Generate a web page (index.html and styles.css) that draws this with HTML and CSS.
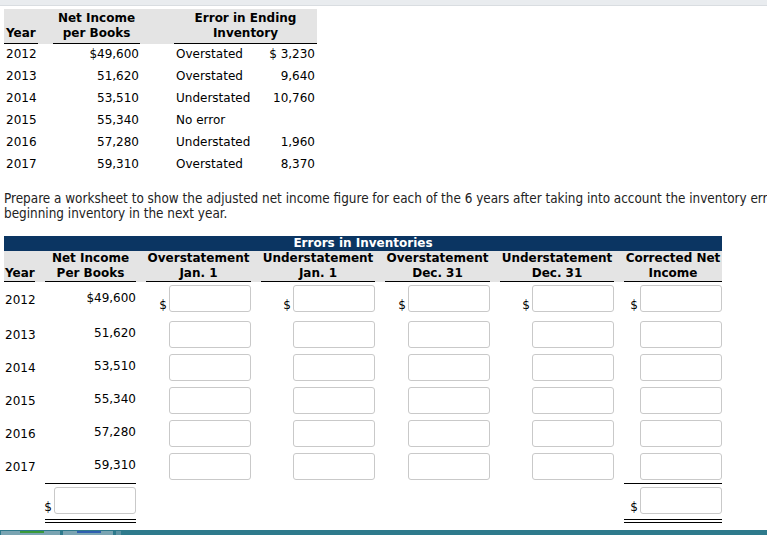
FILE: index.html
```html
<!DOCTYPE html>
<html lang="en">
<head>
<meta charset="utf-8">
<title>Inventory errors worksheet</title>
<link rel="stylesheet" href="styles.css">
</head>
<body>
<div class="topband"></div>
<main class="page">
  <section class="t1">
    <div class="t1-head">
      <div class="h c-year"><span class="ul">Year</span></div>
      <div class="h c-ni"><span class="ul">Net Income<br>per Books</span></div>
      <div class="h c-err"><span class="ul">Error in Ending<br>Inventory</span></div>
    </div>
    <div class="t1-body">
      <div class="c-year">2012</div><div class="c-ni num">$49,600</div><div class="c-lab">Overstated</div><div class="c-amt num">$ 3,230</div>
      <div class="c-year">2013</div><div class="c-ni num">51,620</div><div class="c-lab">Overstated</div><div class="c-amt num">9,640</div>
      <div class="c-year">2014</div><div class="c-ni num">53,510</div><div class="c-lab">Understated</div><div class="c-amt num">10,760</div>
      <div class="c-year">2015</div><div class="c-ni num">55,340</div><div class="c-lab">No error</div><div class="c-amt num"></div>
      <div class="c-year">2016</div><div class="c-ni num">57,280</div><div class="c-lab">Understated</div><div class="c-amt num">1,960</div>
      <div class="c-year">2017</div><div class="c-ni num">59,310</div><div class="c-lab">Overstated</div><div class="c-amt num">8,370</div>
    </div>
  </section>

  <div class="prompt">
    <p><span class="line">Prepare a worksheet to show the adjusted net income figure for each of the 6 years after taking into account the inventory errors and their effect on</span><br>beginning inventory in the next year.</p>
  </div>

  <section class="t2">
    <div class="t2-band">Errors in Inventories</div>
    <div class="t2-head">
      <div class="hh left"><span>Year</span></div>
      <div class="hh"><span>Net Income<br>Per Books</span></div>
      <div class="hh"><span>Overstatement<br>Jan. 1</span></div>
      <div class="hh"><span>Understatement<br>Jan. 1</span></div>
      <div class="hh"><span>Overstatement<br>Dec. 31</span></div>
      <div class="hh"><span>Understatement<br>Dec. 31</span></div>
      <div class="hh"><span>Corrected Net<br>Income</span></div>
    </div>

    <div class="t2-row first">
      <div class="yr">2012</div><div class="ni">$49,600</div>
      <div class="inp"><span class="cur">$</span><input type="text"></div>
      <div class="inp"><span class="cur">$</span><input type="text"></div>
      <div class="inp"><span class="cur">$</span><input type="text"></div>
      <div class="inp"><span class="cur">$</span><input type="text"></div>
      <div class="inp"><span class="cur">$</span><input type="text"></div>
    </div>
    <div class="t2-row">
      <div class="yr">2013</div><div class="ni">51,620</div>
      <div class="inp"><input type="text"></div><div class="inp"><input type="text"></div><div class="inp"><input type="text"></div><div class="inp"><input type="text"></div><div class="inp"><input type="text"></div>
    </div>
    <div class="t2-row">
      <div class="yr">2014</div><div class="ni">53,510</div>
      <div class="inp"><input type="text"></div><div class="inp"><input type="text"></div><div class="inp"><input type="text"></div><div class="inp"><input type="text"></div><div class="inp"><input type="text"></div>
    </div>
    <div class="t2-row">
      <div class="yr">2015</div><div class="ni">55,340</div>
      <div class="inp"><input type="text"></div><div class="inp"><input type="text"></div><div class="inp"><input type="text"></div><div class="inp"><input type="text"></div><div class="inp"><input type="text"></div>
    </div>
    <div class="t2-row">
      <div class="yr">2016</div><div class="ni">57,280</div>
      <div class="inp"><input type="text"></div><div class="inp"><input type="text"></div><div class="inp"><input type="text"></div><div class="inp"><input type="text"></div><div class="inp"><input type="text"></div>
    </div>
    <div class="t2-row">
      <div class="yr">2017</div><div class="ni">59,310</div>
      <div class="inp"><input type="text"></div><div class="inp"><input type="text"></div><div class="inp"><input type="text"></div><div class="inp"><input type="text"></div><div class="inp"><input type="text"></div>
    </div>
    <div class="t2-row total">
      <div class="yr"></div>
      <div class="inp tot"><span class="cur">$</span><input type="text"></div>
      <div></div><div></div><div></div><div></div>
      <div class="inp tot"><span class="cur">$</span><input type="text"></div>
    </div>
  </section>
</main>
<footer class="taskbar">
  <span class="tb tb1"><i class="g"></i></span>
  <span class="tb tb2"><i class="b"></i></span>
  <span class="tb tb3"></span>
</footer>
</body>
</html>
```

FILE: styles.css
```css
html, body {
  margin: 0;
  padding: 0;
  overflow: hidden;
}
body {
  font-family: "DejaVu Sans", Verdana, sans-serif;
  font-size: 12px;
  color: #000;
  background: #fff;
}
.topband {
  height: 5px;
  background: #e9ecef;
  border-bottom: 1px solid #d9dde1;
}
.page {
  padding: 3px 0 0 4px;
}

/* ---------- table 1 ---------- */
.t1 { width: 313px; }
.t1-head,
.t1-body {
  display: grid;
  grid-template-columns: 34px 15px 86px 35px 70px 72px;
}
.t1-head {
  background: #e4e4e4;
  height: 35px;
  font-weight: bold;
  line-height: 15px;
}
.t1-head .h {
  display: flex;
  align-items: flex-end;
}
.t1-head .ul {
  display: block;
  width: 100%;
  border-bottom: 1px solid #000;
  padding-bottom: 2px;
  text-align: center;
}
.t1-head .c-year .ul { text-align: left; padding-left: 2px; box-sizing: border-box; }
.c-year { grid-column: 1; }
.c-ni { grid-column: 3; }
.c-err { grid-column: 5 / 7; }
.c-lab { grid-column: 5; padding-left: 2px; }
.c-amt { grid-column: 6; }
.t1-head .c-ni { margin-right: -1px; }
.t1-head .c-err { margin-right: -1px; }
.t1-body > div {
  height: 22px;
  line-height: 21px;
  white-space: nowrap;
}
.t1-body .c-year { padding-left: 2px; }
.t1-body .num { text-align: right; }
.t1-body .c-amt { padding-right: 1px; }

/* ---------- prompt ---------- */
.prompt {
  margin-top: 15px;
  overflow: hidden;
}
.prompt p {
  margin: 0;
  width: 1200px;
  font-family: "DejaVu Sans Condensed", "DejaVu Sans", sans-serif;
  font-size: 13.4px;
  line-height: 15px;
  color: #222;
}
.prompt .line { white-space: nowrap; }

/* ---------- table 2 ---------- */
.t2 {
  width: 718px;
  margin-top: 15px;
}
.t2-band {
  background: #0b3562;
  color: #fff;
  font-weight: bold;
  text-align: center;
  height: 15px;
  line-height: 15px;
}
.t2-head,
.t2-row {
  display: grid;
  grid-template-columns: 31px 91px 105px 114px 105px 114px 98px;
  column-gap: 10px;
}
.t2-head {
  background: #e4e4e4;
  font-weight: bold;
  line-height: 15px;
}
.t2-head .hh {
  display: flex;
  align-items: flex-end;
}
.t2-head .hh span {
  display: block;
  width: 100%;
  text-align: center;
  border-bottom: 1px solid #000;
  white-space: nowrap;
}
.t2-head .hh.left span { text-align: left; padding-left: 1px; }

.t2-row { height: 33px; }
.t2-row.first { height: 36px; }
.t2-row .yr {
  align-self: center;
  padding-left: 1px;
}
.t2-row .ni {
  align-self: center;
  text-align: right;
  margin-bottom: 4px;
}
.inp {
  display: flex;
  justify-content: flex-end;
  align-items: flex-end;
  padding-top: 3px;
  height: 27px;
}
.cur {
  line-height: 14px;
  margin-right: 2px;
}
.inp input {
  box-sizing: border-box;
  width: 82px;
  height: 27px;
  margin: 0;
  padding: 2px 4px;
  border: 1px solid #c9c9c9;
  border-radius: 3px;
  background: #fff;
  font: inherit;
}
.t2-row.total { height: auto; }
.inp.tot {
  height: 27px;
  padding-top: 3px;
  padding-bottom: 5px;
  border-top: 1px solid #000;
  border-bottom: 4px double #000;
}

/* ---------- bottom bar ---------- */
.taskbar {
  position: fixed;
  left: 0;
  right: 0;
  bottom: 0;
  height: 5px;
  background: #2e7a8c;
  display: flex;
  gap: 3px;
  padding-left: 1px;
  align-items: flex-start;
}
.tb {
  display: block;
  height: 5px;
  background: #7aa4b2;
  position: relative;
  margin-top: 1px;
}
.tb1 { width: 59px; }
.tb2 { width: 50px; }
.tb3 { width: 5px; background: #5d93a3; }
.tb i {
  position: absolute;
  top: 0;
  height: 2px;
  width: 24px;
}
.tb1 i { left: 19px; background: #3a9a3a; }
.tb2 i { left: 14px; background: #2f5fb0; }
```
